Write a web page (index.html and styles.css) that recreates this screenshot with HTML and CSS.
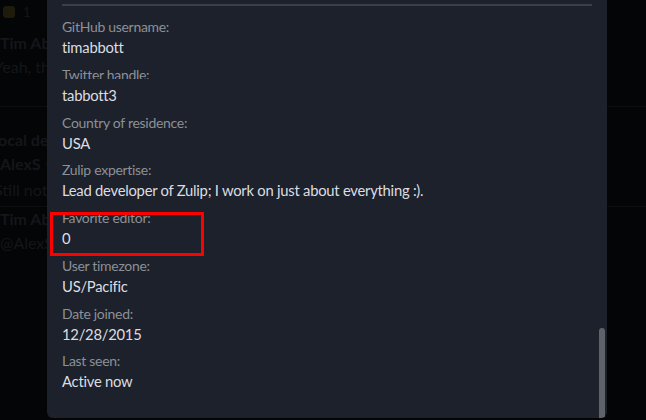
FILE: index.html
```html
<!DOCTYPE html>
<html lang="en">
<head>
<meta charset="utf-8">
<title>User profile</title>
<link rel="stylesheet" href="styles.css">
</head>
<body>
<div class="feed">
  <div class="reaction"><span class="thumb"></span><span class="count">1</span></div>
  <div class="sender first">Tim Abbott</div>
  <div class="msg shift">Yeah, that works</div>
  <div class="sep sep-a"></div>
  <div class="topic shift">local dev setup</div>
  <div class="sender tight">AlexS <span class="time">10:42 AM</span></div>
  <div class="msg shift">Still not working</div>
  <div class="sep sep-b"></div>
  <div class="sender tight">Tim Abbott</div>
  <div class="msg">@AlexS try again</div>
</div>
<div class="modal">
  <div class="rule"></div>
  <div class="fields">
    <div class="field"><div class="label">GitHub username:</div><div class="value">timabbott</div></div>
    <div class="field"><div class="label clipped">Twitter handle:</div><div class="value">tabbott3</div></div>
    <div class="field"><div class="label">Country of residence:</div><div class="value">USA</div></div>
    <div class="field"><div class="label">Zulip expertise:</div><div class="value">Lead developer of Zulip; I work on just about everything :).</div></div>
    <div class="field"><div class="label">Favorite editor:</div><div class="value">0</div></div>
    <div class="field"><div class="label">User timezone:</div><div class="value">US/Pacific</div></div>
    <div class="field"><div class="label">Date joined:</div><div class="value">12/28/2015</div></div>
    <div class="field"><div class="label">Last seen:</div><div class="value">Active now</div></div>
  </div>
  <div class="scrollbar"></div>
</div>
<div class="highlight"></div>
</body>
</html>
```
FILE: styles.css
```css
html, body {
  margin: 0;
  padding: 0;
  height: 420px;
  overflow: hidden;
}
body {
  background: #040507;
  font-family: Lato, "Noto Sans", sans-serif;
  position: relative;
}
.feed {
  padding-top: 2px;
  width: 646px;
  color: #14161a;
  font-size: 16px;
}
.reaction {
  display: flex;
  align-items: center;
  gap: 8px;
  height: 20px;
  padding-left: 3px;
}
.thumb {
  width: 12px;
  height: 12px;
  background: #1e1a0c;
  border-radius: 3px;
}
.count { font-size: 13px; }
.sender {
  font-weight: 700;
  line-height: 24px;
}
.sender.first { margin-top: 9px; }
.time { font-size: 12px; font-weight: 400; }
.msg {
  line-height: 24px;
}
.shift { margin-left: -6px; }
.topic {
  font-weight: 700;
  line-height: 24px;
  margin-top: 21px;
}
.sep {
  height: 1px;
  background: #0c0e11;
}
.sep-a { margin-top: 27px; }
.sep-b { margin-top: 4px; }
.modal {
  position: absolute;
  left: 47px;
  top: -12px;
  width: 560px;
  height: 430px;
  background: #1c212b;
  border-radius: 6px;
  overflow: hidden;
}
.rule {
  height: 2px;
  background: #3a3f49;
  margin: 16px 15px 0 15px;
}
.fields {
  padding: 11px 15px 0 15px;
}
.field {
  margin-bottom: 7.75px;
}
.label {
  color: #8c9097;
  font-size: 14px;
  letter-spacing: -0.3px;
  line-height: 20px;
}
.label.clipped {
  height: 14px;
  overflow: hidden;
  margin-bottom: 6px;
}
.value {
  color: #dcdde0;
  font-size: 14.8px;
  letter-spacing: -0.25px;
  line-height: 20px;
}
.scrollbar {
  position: absolute;
  right: 2px;
  top: 340px;
  width: 6px;
  height: 100px;
  background: #5e636a;
  border-radius: 3px;
}
.highlight {
  position: absolute;
  left: 50px;
  top: 212px;
  width: 148px;
  height: 38px;
  border: 3px solid #ff0000;
}
```
